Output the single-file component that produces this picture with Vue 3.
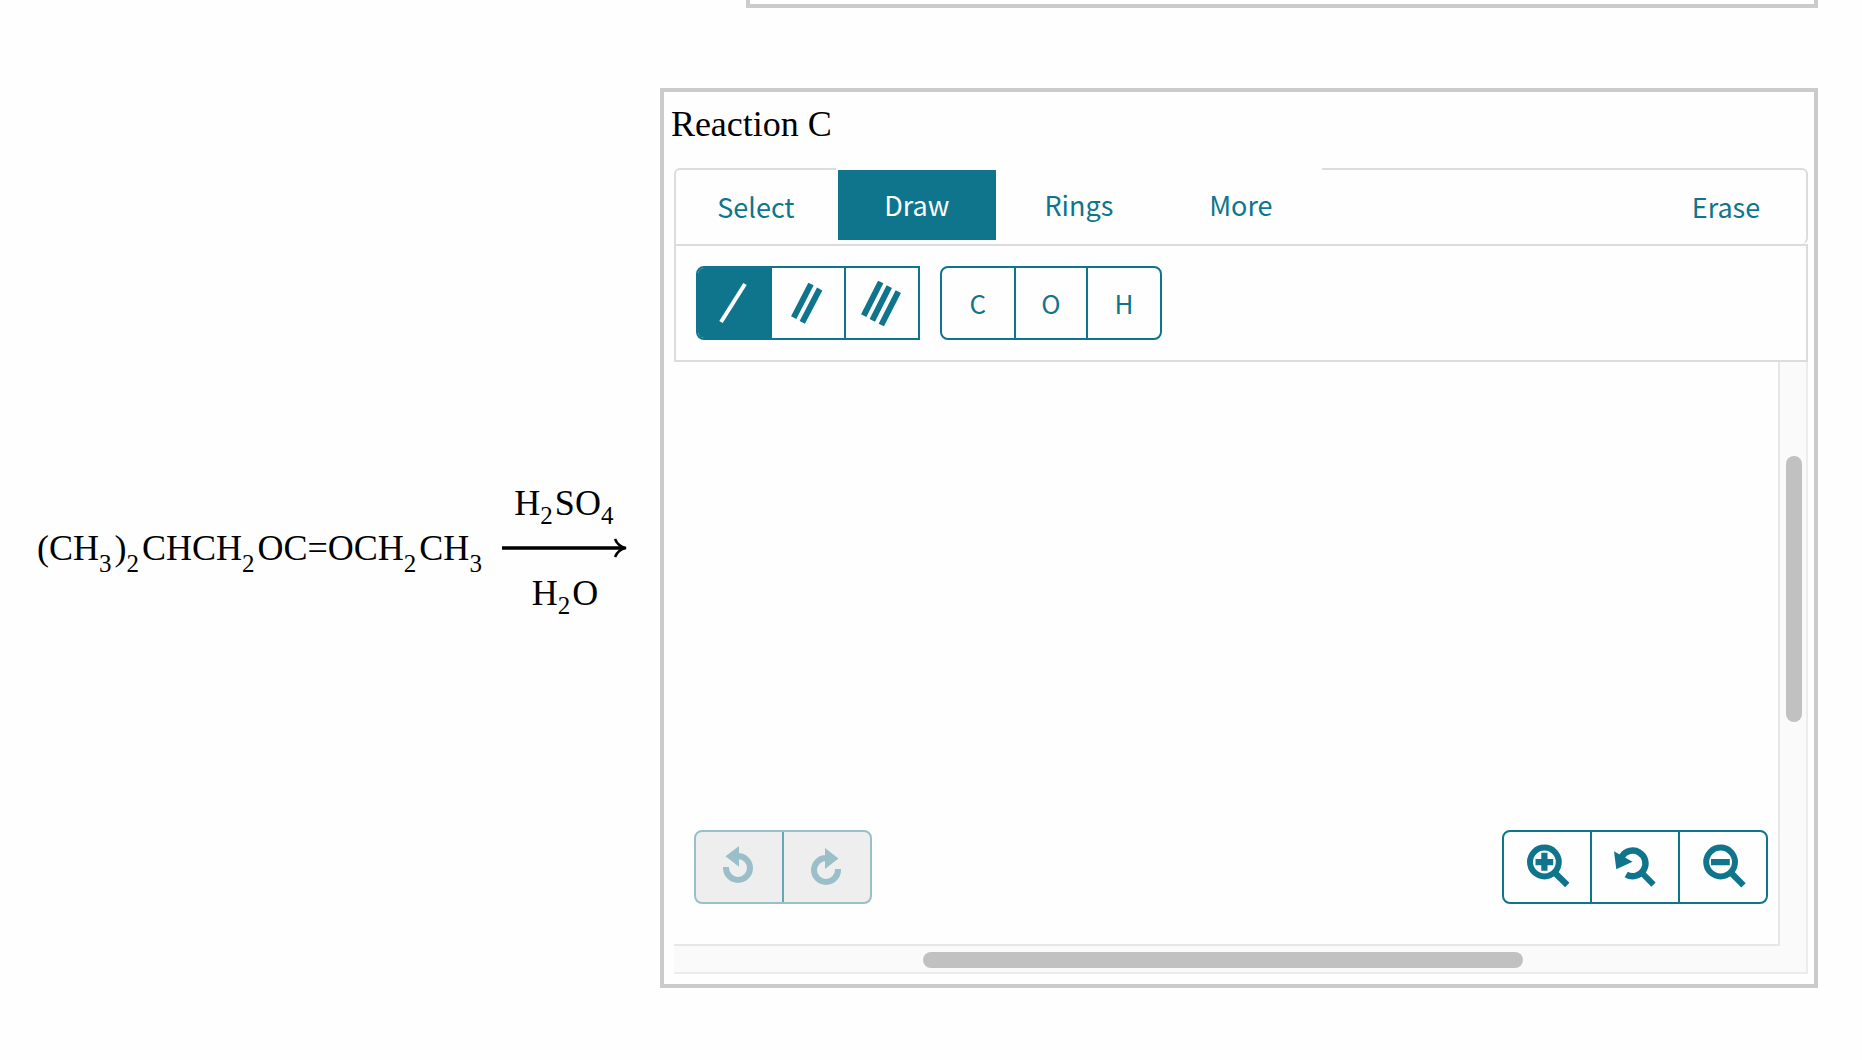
<script setup>
import { ref } from 'vue'

// splits "H_2SO_4" into plain and subscript parts
const parse = (text) =>
  text
    .split(/(_\d)/)
    .filter(Boolean)
    .map((part) => ({ sub: part.startsWith('_'), text: part.replace('_', '') }))

const reactant = parse('(CH_3)_2CHCH_2OC=OCH_2CH_3')
const reagent = parse('H_2SO_4')
const solvent = parse('H_2O')

const tabs = ['Draw', 'Rings', 'More']
const activeTab = ref('Draw')

const bonds = [
  { name: 'Single bond', box: '2 2 72 70', width: 4, path: 'M49 18L25 56' },
  { name: 'Double bond', box: '0 2 72 70', width: 6, path: 'M39 18L21.7 51.7M47.7 23L30.3 56.3' },
  {
    name: 'Triple bond',
    box: '0 2 72 70',
    width: 6,
    path: 'M34.7 16L17.7 49.7M43.3 20.7L26.3 54.3M52.3 25.7L35.3 59'
  }
]
const activeBond = ref('Single bond')

const atoms = ['C', 'O', 'H']
</script>

<template>
  <div class="page">
    <div class="previous-panel"></div>

    <main class="reaction">
      <div class="equation">
        <span class="formula"><template v-for="(p, i) in reactant" :key="i"><sub v-if="p.sub">{{ p.text }}</sub><template v-else>{{ p.text }}</template></template></span>
        <div class="conditions">
          <span class="formula"><template v-for="(p, i) in reagent" :key="i"><sub v-if="p.sub">{{ p.text }}</sub><template v-else>{{ p.text }}</template></template></span>
          <svg class="arrow" viewBox="0 0 126 24" aria-hidden="true">
            <path d="M0 12H122" stroke="#000" stroke-width="3.6" />
            <path d="M113 3C115 8 119 11 124 12C119 13 115 16 113 21" fill="none" stroke="#000" stroke-width="2.6" />
          </svg>
          <span class="formula"><template v-for="(p, i) in solvent" :key="i"><sub v-if="p.sub">{{ p.text }}</sub><template v-else>{{ p.text }}</template></template></span>
        </div>
      </div>

      <section class="panel">
        <h2>Reaction C</h2>

        <div class="editor">
          <nav class="tabs">
            <button type="button" class="tab select">Select</button>
            <div class="modes">
              <button
                v-for="tab in tabs"
                :key="tab"
                type="button"
                class="tab mode"
                :class="{ active: activeTab === tab }"
                @click="activeTab = tab"
              >
                {{ tab }}
              </button>
            </div>
            <div class="filler"></div>
            <button type="button" class="tab erase">Erase</button>
          </nav>

          <div class="toolbar">
            <div class="group bonds">
              <button
                v-for="bond in bonds"
                :key="bond.name"
                type="button"
                :aria-label="bond.name"
                :class="{ active: activeBond === bond.name }"
                @click="activeBond = bond.name"
              >
                <svg :viewBox="bond.box" width="72" height="70">
                  <path :d="bond.path" fill="none" stroke="currentColor" :stroke-width="bond.width" />
                </svg>
              </button>
            </div>
            <div class="group atoms">
              <button v-for="atom in atoms" :key="atom" type="button">{{ atom }}</button>
            </div>
          </div>

          <div class="workspace">
            <div class="canvas">
              <div class="group history">
                <button type="button" aria-label="Undo" disabled>
                  <svg viewBox="2 2 86 70" width="86" height="70">
                    <path d="M32 37V38A12 12 0 1 0 44 26H45" fill="none" stroke="currentColor" stroke-width="6" />
                    <path d="M31.5 26.3L45 16V36.7Z" fill="currentColor" />
                  </svg>
                </button>
                <button type="button" aria-label="Redo" disabled>
                  <svg viewBox="0 2 86 70" width="86" height="70">
                    <path d="M54 39V40A12 12 0 1 1 42 28H41" fill="none" stroke="currentColor" stroke-width="6" />
                    <path d="M54.5 28.5L41 18V39Z" fill="currentColor" />
                  </svg>
                </button>
              </div>
              <div class="group zoom">
                <button type="button" aria-label="Zoom in">
                  <svg viewBox="2 2 86 70" width="86" height="70">
                    <circle cx="42.4" cy="32" r="14.4" fill="none" stroke="currentColor" stroke-width="6" />
                    <path d="M33.5 32.2H51.2M42.4 22.8V40.8M52.5 42.5L65.3 55" fill="none" stroke="currentColor" stroke-width="6.2" />
                  </svg>
                </button>
                <button type="button" aria-label="Reset zoom">
                  <svg viewBox="0 2 86 70" width="86" height="70">
                    <path d="M34.2 44.4A12.8 12.8 0 1 0 29.8 26.6" fill="none" stroke="currentColor" stroke-width="6.4" />
                    <path d="M22 21.3L40.5 31.7L24.3 39.3Z" fill="currentColor" />
                    <path d="M49.5 42.5L61.5 54.6" fill="none" stroke="currentColor" stroke-width="6" />
                  </svg>
                </button>
                <button type="button" aria-label="Zoom out">
                  <svg viewBox="0 2 86 70" width="86" height="70">
                    <circle cx="40.6" cy="32" r="14.4" fill="none" stroke="currentColor" stroke-width="6" />
                    <path d="M31 32.2H49.8M50.8 42.5L63.5 55.4" fill="none" stroke="currentColor" stroke-width="6.2" />
                  </svg>
                </button>
              </div>
            </div>
            <div class="track vertical"><div class="thumb"></div></div>
            <div class="track horizontal"><div class="thumb"></div></div>
          </div>
        </div>
      </section>
    </main>
  </div>
</template>

<style>
body {
  margin: 0;
  background-color: #fefefe;
}
</style>

<style scoped>
* {
  box-sizing: border-box;
}

.page {
  padding-right: 44px;
  color: #000;
  font-family: 'Liberation Serif', 'Times New Roman', serif;
  font-size: 36px;
}

/* bottom edge of the panel above */
.previous-panel {
  height: 8px;
  margin: 0 0 80px 746px;
  border: 4px solid #cbcbcb;
  border-top: none;
}

.reaction {
  display: flex;
  align-items: center;
}

/* equation */
.equation {
  display: flex;
  flex: none;
  align-items: center;
  padding: 20px 32px 0 37px;
}

.formula {
  line-height: 40px;
  white-space: nowrap;
}

sub {
  margin-right: 3px;
  font-size: 25px;
  line-height: 0;
  vertical-align: -12px;
}

.conditions {
  display: flex;
  flex-direction: column;
  align-items: center;
  gap: 13px;
  margin-left: 17px;
}

.conditions sub {
  margin-right: 2px;
  vertical-align: -9px;
}

.arrow {
  width: 126px;
  height: 24px;
}

/* panel */
.panel {
  flex: 1;
  min-width: 0;
  border: 4px solid #cbcbcb;
}

h2 {
  margin: 0;
  padding: 12px 7px 24px;
  font-size: 36px;
  font-weight: 400;
  line-height: 40px;
}

.editor {
  margin: 0 6px 10px 10px;
}

button {
  margin: 0;
  padding: 0 0 2px;
  border: 0 solid #0f758c;
  background-color: transparent;
  color: #0f758c;
  font-family: 'Noto Sans CJK SC', 'Noto Sans', sans-serif;
  font-size: 27px;
  cursor: pointer;
}

button svg {
  display: block;
}

.tabs {
  display: flex;
  height: 76px;
}

.tab {
  width: 162px;
}

.select {
  border: 2px solid #dcdcdc;
  border-width: 2px 0 0 2px;
  border-top-left-radius: 6px;
}

.modes {
  display: flex;
  gap: 4px;
  padding: 2px 2px 4px;
}

.mode {
  width: 158px;
}

.active {
  background-color: #0f758c;
  color: #fff;
}

.filler {
  flex: 1;
  border-top: 2px solid #dcdcdc;
}

.erase {
  border: 2px solid #dcdcdc;
  border-width: 2px 2px 0 0;
  border-radius: 0 6px 6px 0;
}

.toolbar {
  display: flex;
  gap: 20px;
  padding: 20px;
  border: 2px solid #dcdcdc;
}

.group {
  display: flex;
  overflow: hidden;
  border: 2px solid #0f758c;
  border-radius: 8px;
}

.group button {
  height: 70px;
}

.group button + button {
  border-left-width: 2px;
}

.bonds {
  border-radius: 8px 0 0 8px;
}

.bonds button,
.history button,
.zoom button {
  padding: 0;
}

.atoms button {
  width: 72px;
  font-size: 26px;
}

.atoms button:last-child {
  width: 74px;
}

/* drawing area */
.workspace {
  display: grid;
  grid-template-columns: 1fr 26px;
  grid-template-rows: 584px 26px;
  border: 2px solid #ececec;
  border-width: 0 2px 2px 0;
  background-color: #fafafa;
}

.canvas {
  display: flex;
  align-items: flex-end;
  justify-content: space-between;
  padding: 0 10px 40px 20px;
  border: 2px solid #e7e7e7;
  border-width: 0 2px 2px 0;
  background-color: #fefefe;
}

.history {
  border-color: #9bbfc9;
  background-color: #eee;
}

.history button {
  border-color: #69a5b4;
  color: #9bbfc9;
  cursor: default;
}

.track {
  display: flex;
}

.thumb {
  border-radius: 8px;
  background-color: #c1c1c1;
}

.vertical {
  padding: 94px 4px 0 6px;
}

.vertical .thumb {
  width: 16px;
  height: 266px;
}

.horizontal {
  grid-column: 1 / -1;
  padding: 6px 0 4px 22%;
}

.horizontal .thumb {
  width: 68%;
  height: 16px;
}
</style>
